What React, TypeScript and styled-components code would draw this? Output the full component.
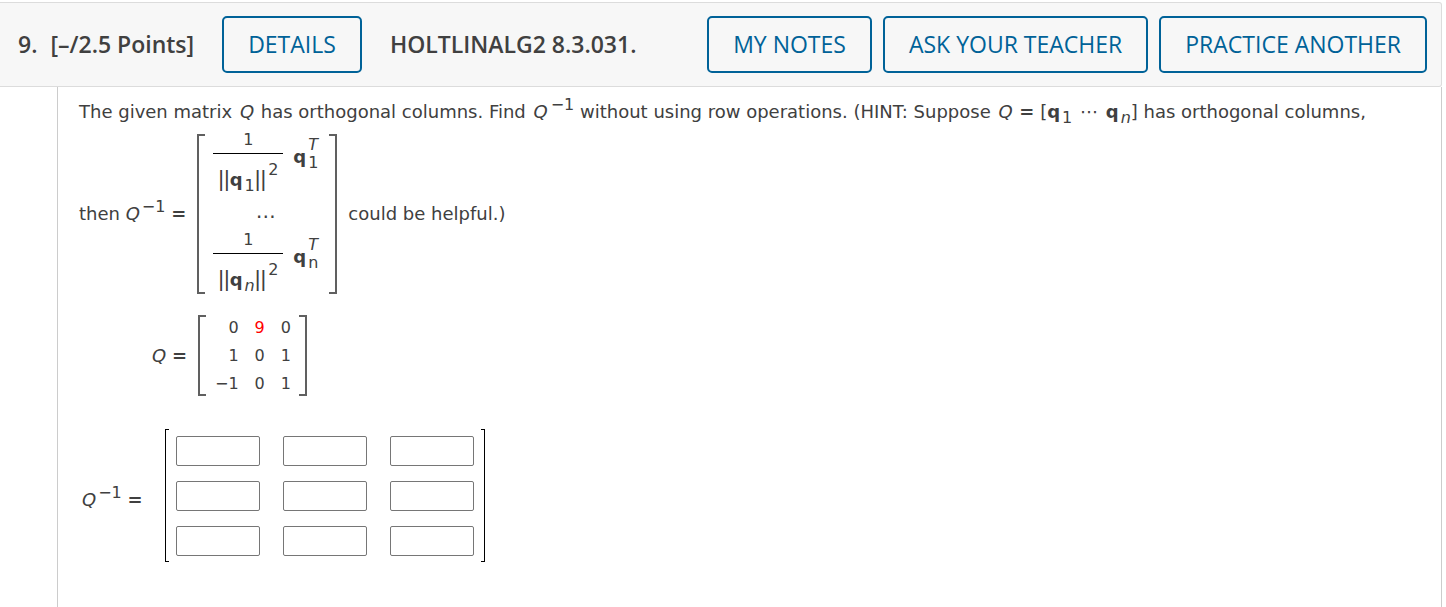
import React from "react";
import styled, { createGlobalStyle, css } from "styled-components";

const GlobalStyle = createGlobalStyle`
  *, *::before, *::after { box-sizing: border-box; }
  body {
    margin: 0;
    background: #fff;
    color: #404040;
    font-family: "DejaVu Sans", Verdana, sans-serif;
    font-size: 18px;
    line-height: 24px;
  }
`;

const Page = styled.div`
  display: flex;
  flex-direction: column;
  min-height: 100vh;
  padding: 2px 4px 0 0;
`;

const Header = styled.header`
  display: flex;
  align-items: center;
  padding: 13px 14px 13px 18px;
  background: #f7f7f7;
  border: 1px solid #dcdcdc;
  border-left: 0;
  border-radius: 0 3px 3px 0;
  font-family: "Open Sans", sans-serif;
  font-size: 23px;
  line-height: 30px;
  font-weight: 600;
  white-space: nowrap;
`;

const Heading = styled.h1`
  display: flex;
  gap: 13px;
  margin: 0 28px 0 0;
  padding-bottom: 1px;
  font: inherit;
`;

const Source = styled.span`
  margin-left: 28px;
  padding-bottom: 1px;
`;

const Actions = styled.div`
  display: flex;
  gap: 11px;
  margin-left: auto;
`;

const OutlineButton = styled.button`
  padding: 11px 24px 12px;
  border: 2px solid #006298;
  border-radius: 5px;
  background: #f7f7f7;
  color: #006298;
  font: inherit;
  font-weight: 400;
  cursor: pointer;
`;

const Question = styled.main`
  flex: 1;
  margin-left: 57px;
  padding: 13px 21px 32px;
  border: solid #ccc;
  border-width: 0 1px;
`;

const Var = styled.i``;
const Vec = styled.b``;

const Line = styled.p`
  margin: 0;

  ${Var} {
    margin: 0 1px 0 2px;
  }
`;

const Equation = styled.div<{ $indent?: number; $gap?: number; $top?: number }>`
  display: flex;
  align-items: center;
  gap: ${(p) => p.$gap ?? 11}px;
  margin-top: ${(p) => p.$top ?? 21}px;
  padding-left: ${(p) => p.$indent ?? 0}px;
`;

const Script = styled.span<{ $rise: number; $italic?: boolean }>`
  margin-left: 2px;
  font-size: 16px;
  line-height: 0;
  vertical-align: ${(p) => p.$rise}px;
  font-style: ${(p) => (p.$italic ? "italic" : "normal")};
`;

const Dots = styled.span`
  margin: 0 2px;
`;

const Equals = styled.span`
  font-weight: 700;
`;

const bracketSide = css<{ $thin?: boolean }>`
  content: "";
  border: solid ${(p) => (p.$thin ? "#000" : "#606060")};
  width: ${(p) => (p.$thin ? 4 : 8)}px;
`;

const Bracketed = styled.div<{ $thin?: boolean }>`
  display: flex;
  &::before {
    ${bracketSide}
    border-width: ${(p) => (p.$thin ? "1px 0 1px 1px" : "2px 0 2px 2px")};
  }
  &::after {
    ${bracketSide}
    border-width: ${(p) => (p.$thin ? "1px 1px 1px 0" : "2px 2px 2px 0")};
  }
`;

const HintRows = styled.div`
  display: grid;
  grid-template-rows: 60px 40px 60px;
  justify-items: center;
  align-items: center;
  padding: 0 11px 0 8px;
`;

const Ellipsis = styled.span`
  padding-bottom: 6px;
  font-size: 20px;
`;

const Term = styled.div`
  display: flex;
  align-items: flex-start;
  gap: 10px;
`;

const Fraction = styled.div`
  width: 70px;
  text-align: center;
`;

const Numerator = styled.div`
  height: 19px;
  border-bottom: 1px solid #000;
  font-size: 16px;
  line-height: 10px;
`;

const Denominator = styled.div`
  height: 40px;
  line-height: 52px;
  white-space: nowrap;
`;

const Bars = styled.span`
  font-family: "Liberation Sans", sans-serif;
  font-size: 22px;
  line-height: 0;
`;

const Stacked = styled.span`
  display: flex;
  align-items: center;
  height: 44px;
`;

const ScriptPair = styled.span`
  display: grid;
  margin: 0 0 6px 2px;
  font-size: 16px;
  line-height: 18px;
`;

const Numbers = styled.div`
  display: grid;
  grid-template-columns: repeat(3, auto);
  gap: 4px 16px;
  justify-items: end;
  padding: 1px 8px 0 9px;
  font-size: 16px;
  line-height: 24px;
`;

const Random = styled.span`
  color: #f00;
`;

const Answers = styled.div`
  display: grid;
  grid-template-columns: repeat(3, 84px);
  gap: 15px 23px;
  padding: 7px 7px 6px;
`;

const AnswerBox = styled.input`
  width: 84px;
  height: 30px;
  padding: 1px 4px;
  border: 1px solid #767676;
  border-radius: 2px;
  background: #fff;
  font: inherit;
`;

const AnswerLabel = styled.span`
  padding-top: 8px;
`;

const InverseQ = () => (
  <>
    <Var>Q</Var>
    <Script $rise={8}>−1</Script>
  </>
);

const HintTerm = ({ index }: { index: string }) => (
  <Term>
    <Fraction>
      <Numerator>1</Numerator>
      <Denominator>
        <Bars>||</Bars>
        <Vec>q</Vec>
        <Script $rise={-5} $italic={index === "n"}>{index}</Script>
        <Bars>||</Bars>
        <Script $rise={11}>2</Script>
      </Denominator>
    </Fraction>
    <Stacked>
      <Vec>q</Vec>
      <ScriptPair>
        <Var>T</Var>
        <span>{index}</span>
      </ScriptPair>
    </Stacked>
  </Term>
);

const MATRIX = ["0", "9", "0", "1", "0", "1", "−1", "0", "1"];

export default function App() {
  return (
    <Page>
      <GlobalStyle />
      <Header>
        <Heading>
          <span>9.</span>
          <span>[–/2.5 Points]</span>
        </Heading>
        <OutlineButton type="button">DETAILS</OutlineButton>
        <Source>HOLTLINALG2 8.3.031.</Source>
        <Actions>
          <OutlineButton type="button">MY NOTES</OutlineButton>
          <OutlineButton type="button">ASK YOUR TEACHER</OutlineButton>
          <OutlineButton type="button">PRACTICE ANOTHER</OutlineButton>
        </Actions>
      </Header>
      <Question>
        <Line>
          The given matrix <Var>Q</Var> has orthogonal columns. Find <InverseQ /> without using row
          operations. (HINT: Suppose <Var>Q</Var> <Equals>=</Equals> [<Vec>q</Vec>
          <Script $rise={-5}>1</Script> <Dots>⋯</Dots> <Vec>q</Vec>
          <Script $rise={-5} $italic>n</Script>] has orthogonal columns,
        </Line>
        <Equation $top={10}>
          <span>
            then <InverseQ /> <Equals>=</Equals>
          </span>
          <Bracketed>
            <HintRows>
              <HintTerm index="1" />
              <Ellipsis>…</Ellipsis>
              <HintTerm index="n" />
            </HintRows>
          </Bracketed>
          <span>could be helpful.)</span>
        </Equation>
        <Equation $indent={73}>
          <span>
            <Var>Q</Var> <Equals>=</Equals>
          </span>
          <Bracketed>
            <Numbers>
              {MATRIX.map((value, i) =>
                value === "9" ? <Random key={i}>{value}</Random> : <span key={i}>{value}</span>
              )}
            </Numbers>
          </Bracketed>
        </Equation>
        <Equation $indent={3} $gap={22} $top={33}>
          <AnswerLabel>
            <InverseQ /> <Equals>=</Equals>
          </AnswerLabel>
          <Bracketed $thin>
            <Answers>
              {MATRIX.map((_, i) => (
                <AnswerBox
                  key={i}
                  type="text"
                  aria-label={`Row ${Math.floor(i / 3) + 1}, column ${(i % 3) + 1}`}
                />
              ))}
            </Answers>
          </Bracketed>
        </Equation>
      </Question>
    </Page>
  );
}
